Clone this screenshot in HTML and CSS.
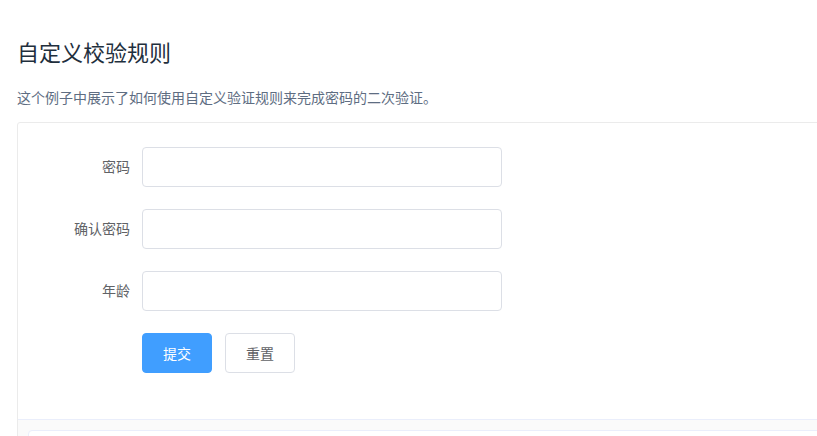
FILE: index.html
```html
<!DOCTYPE html>
<html lang="zh-CN">
<head>
  <meta charset="UTF-8">
  <meta name="viewport" content="width=device-width, initial-scale=1.0">
  <title>自定义校验规则</title>
  <link rel="stylesheet" href="styles.css">
</head>
<body>
  <div class="page">
    <h3>自定义校验规则</h3>
    <p class="desc">这个例子中展示了如何使用自定义验证规则来完成密码的二次验证。</p>

    <!-- 示例区域 -->
    <div class="demo-block">
      <form class="demo-form" onsubmit="return false;">
        <div class="form-item">
          <label class="form-label" for="pass">密码</label>
          <input class="form-input" type="password" id="pass" autocomplete="off">
        </div>
        <div class="form-item">
          <label class="form-label" for="checkPass">确认密码</label>
          <input class="form-input" type="password" id="checkPass" autocomplete="off">
        </div>
        <div class="form-item">
          <label class="form-label" for="age">年龄</label>
          <input class="form-input" type="text" id="age">
        </div>
        <div class="form-item form-actions">
          <button class="btn btn-primary" type="submit">提交</button>
          <button class="btn" type="reset">重置</button>
        </div>
      </form>

      <div class="demo-source">
        <div class="code-box"></div>
      </div>
    </div>
  </div>
</body>
</html>
```

FILE: styles.css
```css
html, body {
  margin: 0;
  padding: 0;
  overflow: hidden;
  background-color: #fff;
}

body {
  font-family: "Helvetica Neue", Helvetica, "Noto Sans CJK SC", "Noto Sans", Arial, sans-serif;
  color: #606266;
}

.page {
  padding: 38px 0 0 17px;
}

h3 {
  margin: 0;
  font-size: 22px;
  line-height: 32px;
  font-weight: 400;
  color: #1f2f3d;
}

.desc {
  margin: 18px 0 0;
  font-size: 14px;
  line-height: 21px;
  color: #5e6d82;
}

.demo-block {
  width: 960px;
  margin-top: 13px;
  border: 1px solid #ebebeb;
  border-radius: 3px;
}

.demo-form {
  padding: 24px;
}

.form-item {
  display: flex;
  align-items: center;
  margin-bottom: 22px;
}

.form-label {
  width: 100px;
  padding-right: 12px;
  box-sizing: border-box;
  text-align: right;
  font-size: 14px;
  line-height: 40px;
  color: #606266;
}

.form-input {
  width: 360px;
  height: 40px;
  padding: 0 15px;
  border: 1px solid #dcdfe6;
  border-radius: 4px;
  box-sizing: border-box;
  font-size: 14px;
  color: #606266;
  outline: none;
}

.form-actions {
  padding-left: 100px;
  gap: 13px;
}

.btn {
  height: 40px;
  width: 70px;
  padding: 0;
  border: 1px solid #dcdfe6;
  border-radius: 4px;
  background-color: #fff;
  color: #606266;
  font-family: inherit;
  font-size: 14px;
  cursor: pointer;
}

.btn-primary {
  background-color: #409eff;
  border-color: #409eff;
  color: #fff;
}

.demo-source {
  height: 60px;
  padding: 10px 0 0 10px;
  border-top: 1px solid #eaeefb;
  background-color: #fafafa;
}

.code-box {
  height: 60px;
  border: 1px solid #eaeefb;
  border-radius: 4px;
  background-color: #fff;
}
```
